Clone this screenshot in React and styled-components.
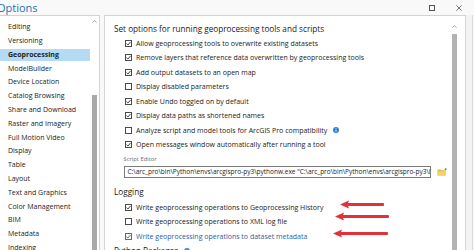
import React from "react"
import styled, { createGlobalStyle } from "styled-components"

const GlobalStyle = createGlobalStyle`
  html, body {
    margin: 0;
    padding: 0;
  }
  body {
    width: 474px;
    height: 250px;
    overflow: hidden;
    background: #f9f9f9;
    font-family: "Open Sans", "Noto Sans", sans-serif;
    color: #1f1f1f;
  }
`

const Window = styled.div`
  position: relative;
  width: 474px;
  height: 250px;
  display: flex;
  flex-direction: column;
  background: #f9f9f9;
  overflow: hidden;
`

const TitleBar = styled.div`
  height: 15px;
  flex-shrink: 0;
  display: flex;
  align-items: center;
`

const Title = styled.div`
  font-size: 11px;
  line-height: 15px;
  color: #2472b3;
  margin-left: -3px;
`

const Controls = styled.div`
  margin-left: auto;
  margin-right: 12px;
  display: flex;
  align-items: center;
  gap: 21px;
  color: #555;
`

const Body = styled.div`
  flex: 1;
  min-height: 0;
  display: flex;
`

const NavPanel = styled.div`
  width: 99px;
  margin-left: -1px;
  flex-shrink: 0;
  display: flex;
  background: #fff;
  border: 1px solid #d3d3d3;
  border-bottom: none;
  overflow: hidden;
`

const NavList = styled.ul`
  flex: 1;
  list-style: none;
  margin: -8.5px 0 0;
  padding: 0;
`

const NavItem = styled.li`
  height: 12px;
  line-height: 12px;
  margin-bottom: 1.8px;
  padding-left: 8px;
  font-size: 7px;
  white-space: nowrap;
  color: #222;
  font-weight: ${(p) => (p.$active ? 700 : 400)};
  background: ${(p) => (p.$active ? "#b5daf3" : "transparent")};
`

const ScrollTrack = styled.div`
  width: ${(p) => p.$w}px;
  margin-right: ${(p) => p.$mr || 0}px;
  flex-shrink: 0;
  display: flex;
  flex-direction: column;
  align-items: center;
`

const ScrollArrow = styled.svg`
  margin-top: ${(p) => p.$top}px;
  flex-shrink: 0;
`

const ScrollThumb = styled.div`
  width: ${(p) => p.$w}px;
  margin-top: ${(p) => p.$top}px;
  flex: 1;
  background: ${(p) => p.$color};
`

const ContentPanel = styled.div`
  flex: 1;
  margin-left: 4px;
  display: flex;
  background: #fff;
  border: 1px solid #d3d3d3;
  border-bottom: none;
  overflow: hidden;
`

const Content = styled.div`
  flex: 1;
  padding: 7px 0 0 9px;
  min-width: 0;
`

const Heading = styled.div`
  font-size: 8.2px;
  line-height: 12px;
  color: #1a1a1a;
  white-space: nowrap;
  margin-top: ${(p) => p.$mt || 0}px;
  margin-bottom: ${(p) => p.$mb || 0}px;
  display: flex;
  align-items: center;
  gap: 6px;
`

const Options = styled.div`
  margin-left: 11px;
  margin-top: ${(p) => p.$mt || 0}px;
`

const Row = styled.div`
  height: ${(p) => p.$h || 14.5}px;
  display: flex;
  align-items: center;
  gap: 4px;
  font-size: 7px;
  white-space: nowrap;
  color: ${(p) => (p.$accent ? "#2d5da3" : "#222")};
`

const Box = styled.span`
  width: 7px;
  height: 7px;
  box-sizing: border-box;
  border: 1px solid ${(p) => (p.$accent ? "#3d6fb5" : "#4a4a4a")};
  background: #fff;
  flex-shrink: 0;
  display: flex;
  align-items: center;
  justify-content: center;
`

const InfoSlot = styled.span`
  display: flex;
  margin-left: 2px;
`

const FieldLabel = styled.div`
  margin: 1.5px 0 0 9.5px;
  font-size: 5.8px;
  line-height: 11px;
  color: #6b6b6b;
`

const FieldRow = styled.div`
  margin: 1.5px 0 0 9.5px;
  display: flex;
  align-items: center;
  gap: 6px;
`

const Field = styled.div`
  width: 307px;
  height: 12px;
  box-sizing: border-box;
  border: 1px solid #7b7b7b;
  padding-left: 3px;
  font-size: 6.5px;
  line-height: 10px;
  white-space: nowrap;
  overflow: hidden;
  color: #222;
`

const WindowEdge = styled.div`
  width: 7px;
  flex-shrink: 0;
  background: #f3f3f3;
  border-right: 1px solid #dadada;
  margin-right: 1px;
  box-sizing: border-box;
`

const Arrow = styled.svg`
  position: absolute;
  left: ${(p) => p.$x}px;
  top: ${(p) => p.$y}px;
`

const navItems = [
  "Selection",
  "Editing",
  "Versioning",
  "Geoprocessing",
  "ModelBuilder",
  "Device Location",
  "Catalog Browsing",
  "Share and Download",
  "Raster and Imagery",
  "Full Motion Video",
  "Display",
  "Table",
  "Layout",
  "Text and Graphics",
  "Color Management",
  "BIM",
  "Metadata",
  "Indexing",
]

const gpOptions = [
  ["Allow geoprocessing tools to overwrite existing datasets", true],
  ["Remove layers that reference data overwritten by geoprocessing tools", true],
  ["Add output datasets to an open map", true],
  ["Display disabled parameters", false],
  ["Enable Undo toggled on by default", true],
  ["Display data paths as shortened names", true],
  ["Analyze script and model tools for ArcGIS Pro compatibility", false, true],
  ["Open messages window automatically after running a tool", true],
]

const logOptions = [
  ["Write geoprocessing operations to Geoprocessing History", true],
  ["Write geoprocessing operations to XML log file", false],
  ["Write geoprocessing operations to dataset metadata", true, true],
]

function Check({ checked, accent }) {
  return (
    <Box $accent={accent}>
      {checked && (
        <svg width="5" height="5" viewBox="0 0 5 5">
          <path
            d="M0.4 2.6 L1.9 4 L4.6 0.9"
            fill="none"
            stroke={accent ? "#2d5da3" : "#2a2a2a"}
            strokeWidth="0.9"
          />
        </svg>
      )}
    </Box>
  )
}

function Info() {
  return (
    <svg width="6" height="6" viewBox="0 0 6 6">
      <circle cx="3" cy="3" r="3" fill="#2f7fd3" />
      <rect x="2.6" y="2.5" width="0.8" height="2.3" fill="#fff" />
      <circle cx="3" cy="1.5" r="0.45" fill="#fff" />
    </svg>
  )
}

function Folder() {
  return (
    <svg width="10" height="8" viewBox="0 0 10 8">
      <path d="M0.5 1.5 H3.5 L4.3 2.3 H8.5 V7.5 H0.5 Z" fill="#e3b83c" />
      <path d="M0.5 3.3 H9.5 L8.6 7.5 H0.5 Z" fill="#f4d464" />
      <circle cx="8.6" cy="1.2" r="1" fill="#3e7fd0" />
    </svg>
  )
}

function RedArrow({ x, y, w }) {
  return (
    <Arrow $x={x} $y={y} width={w} height="9" viewBox={`0 0 ${w} 9`}>
      <rect x="7" y="3" width={w - 7} height="3" rx="1" fill="#e43038" />
      <path d="M0 4.5 L9 0.5 L7.5 4.5 L9 8.5 Z" fill="#e43038" />
    </Arrow>
  )
}

function OptionRow({ label, checked, info, accent, h }) {
  return (
    <Row $accent={accent} $h={h}>
      <Check checked={checked} accent={accent} />
      <span>{label}</span>
      {info && (
        <InfoSlot>
          <Info />
        </InfoSlot>
      )}
    </Row>
  )
}

export default function App() {
  return (
    <Window>
      <GlobalStyle />
      <TitleBar>
        <Title>Options</Title>
        <Controls>
          <svg width="6" height="6" viewBox="0 0 6 6">
            <rect x="0.5" y="0.5" width="5" height="5" fill="none" stroke="#555" />
          </svg>
          <svg width="6" height="6" viewBox="0 0 6 6">
            <path d="M0.3 0.3 L5.7 5.7 M5.7 0.3 L0.3 5.7" stroke="#555" strokeWidth="0.8" />
          </svg>
        </Controls>
      </TitleBar>
      <Body>
        <NavPanel>
          <NavList>
            {navItems.map((item) => (
              <NavItem key={item} $active={item === "Geoprocessing"}>
                {item}
              </NavItem>
            ))}
          </NavList>
          <ScrollTrack $w={9}>
            <ScrollArrow $top={4} width="5" height="3" viewBox="0 0 5 3">
              <path d="M0.5 2.6 L2.5 0.6 L4.5 2.6" fill="none" stroke="#8a8a8a" strokeWidth="0.8" />
            </ScrollArrow>
            <ScrollThumb $w={4.5} $top={72} $color="#a9a9a9" />
          </ScrollTrack>
        </NavPanel>
        <ContentPanel>
          <Content>
            <Heading $mb={1}>Set options for running geoprocessing tools and scripts</Heading>
            <Options>
              {gpOptions.map(([label, checked, info]) => (
                <OptionRow key={label} label={label} checked={checked} info={info} />
              ))}
            </Options>
            <FieldLabel>Script Editor</FieldLabel>
            <FieldRow>
              <Field>
                C:\arc_pro\bin\Python\envs\arcgispro-py3\pythonw.exe "C:\arc_pro\bin\Python\envs\arcgispro-py3\Lib\idlelib\idle.pyw"
              </Field>
              <Folder />
            </FieldRow>
            <Heading $mt={8}>Logging</Heading>
            <Options $mt={2}>
              {logOptions.map(([label, checked, accent]) => (
                <OptionRow key={label} label={label} checked={checked} accent={accent} h={14.6} />
              ))}
            </Options>
            <Heading $mt={1.5}>
              Python Packages
              <Info />
            </Heading>
          </Content>
          <ScrollTrack $w={11} $mr={5}>
            <ScrollArrow $top={9} width="5" height="3" viewBox="0 0 5 3">
              <path d="M0.5 2.6 L2.5 0.6 L4.5 2.6" fill="none" stroke="#8a8a8a" strokeWidth="0.8" />
            </ScrollArrow>
            <ScrollThumb $w={5} $top={6} $color="#b3b3b3" />
          </ScrollTrack>
        </ContentPanel>
        <WindowEdge />
      </Body>
      <RedArrow x={340} y={199.5} w={44} />
      <RedArrow x={335} y={211.5} w={54} />
      <RedArrow x={333} y={229} w={55} />
    </Window>
  )
}
